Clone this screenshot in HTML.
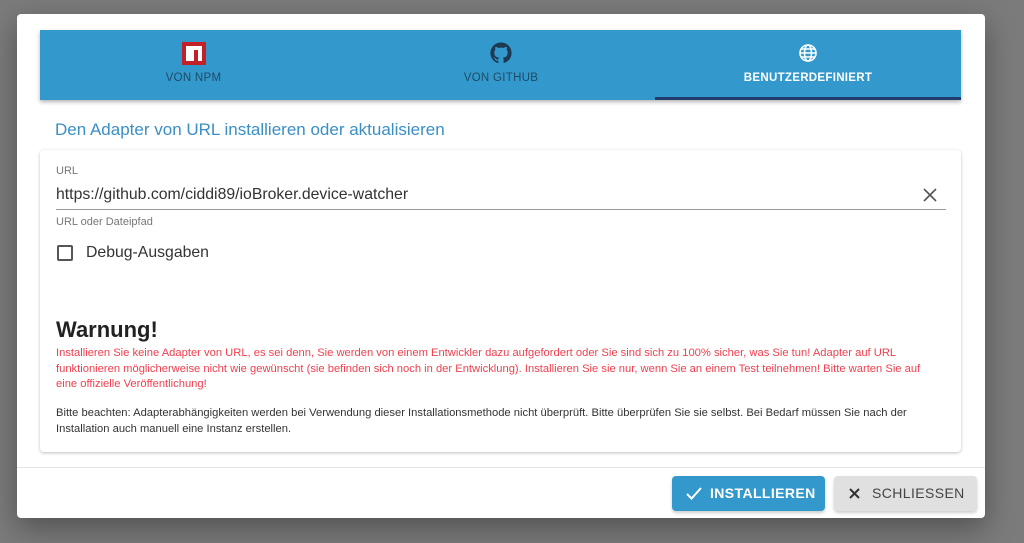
<!DOCTYPE html>
<html><head><meta charset="utf-8"><style>
*{margin:0;padding:0;box-sizing:border-box}
body{width:1024px;height:543px;background:#7b7b7b;font-family:"Liberation Sans",sans-serif;position:relative;overflow:hidden}
.dlg{position:absolute;left:17px;top:14px;width:968px;height:504px;background:#fff;border-radius:4px;box-shadow:0 10px 30px rgba(0,0,0,.35)}
.tabs{position:absolute;left:23px;top:16px;width:921px;height:70px;background:#3399cc;box-shadow:0 2px 4px rgba(0,0,0,.3)}
.tab{position:absolute;top:0;height:70px;text-align:center;font-size:11.5px;letter-spacing:.3px;color:#1e4a66}
.tab .lbl{position:absolute;top:42px;width:100%}
.ind{position:absolute;left:615px;top:67px;width:306px;height:3px;background:#1f3c6c}
.title{position:absolute;left:38px;top:106px;font-size:17px;color:#3a8fc4}
.card{position:absolute;left:23px;top:136px;width:921px;height:302px;background:#fff;border-radius:4px;box-shadow:0 1px 3px rgba(0,0,0,.25)}
.foot{position:absolute;left:0;top:453px;width:968px;height:1px;background:#e4e4e4}
.btn{position:absolute;top:462px;height:35px;border-radius:4px;font-size:14px;font-weight:bold;letter-spacing:.4px;line-height:35px;box-shadow:0 2px 3px rgba(0,0,0,.2)}
.sm{position:absolute;left:16px;width:885px;font-size:11.2px;line-height:15.5px}
</style></head><body>
<div class="dlg">
 <div class="tabs">
  <div class="tab" style="left:0;width:307px">
   <svg style="position:absolute;left:142px;top:12px" width="24" height="23" viewBox="0 0 24 23"><rect width="24" height="23" fill="#c12127"/><path d="M4 4h16v15h-4V8h-4v11H4z" fill="#fff"/></svg>
   <div class="lbl">VON NPM</div></div>
  <div class="tab" style="left:307px;width:308px">
   <svg style="position:absolute;left:142px;top:11px" width="24" height="24" viewBox="0 0 24 24"><path fill="#1e3a52" d="M12 1.5a10.5 10.5 0 0 0-3.3 20.5c.5.1.7-.2.7-.5v-1.900c-2.9.6-3.5-1.300-3.5-1.300-.5-1.200-1.200-1.500-1.200-1.500-.9-.7.1-.6.1-.6 1 .1 1.600 1.100 1.600 1.100.9 1.600 2.500 1.100 3.100.8.1-.7.4-1.100.6-1.400-2.300-.3-4.800-1.200-4.800-5.200 0-1.100.4-2.100 1.100-2.800-.1-.3-.5-1.400.1-2.800 0 0 .9-.3 2.900 1.100a10 10 0 0 1 5.200 0c2-1.400 2.900-1.100 2.900-1.100.6 1.400.2 2.500.1 2.800.7.7 1.100 1.700 1.100 2.800 0 4-2.500 4.900-4.800 5.200.4.3.7 1 .7 1.900v2.900c0 .3.2.6.7.5A10.5 10.5 0 0 0 12 1.5z"/></svg>
   <div class="lbl">VON GITHUB</div></div>
  <div class="tab" style="left:615px;width:306px;color:#fff;font-weight:bold">
   <svg style="position:absolute;left:143px;top:13px" width="20" height="20" viewBox="0 0 20 20" fill="none" stroke="#fff" stroke-width="1.6"><circle cx="10" cy="10" r="8"/><ellipse cx="10" cy="10" rx="3.5" ry="8"/><path d="M2 10h16M3.5 6h13M3.5 14h13"/></svg>
   <div class="lbl">BENUTZERDEFINIERT</div></div>
  <div class="ind"></div>
 </div>
 <div class="title">Den Adapter von URL installieren oder aktualisieren</div>
 <div class="card">
  <div style="position:absolute;left:16px;top:15px;font-size:11px;color:#777">URL</div>
  <div style="position:absolute;left:16px;top:36px;font-size:15.8px;color:#333">https://github.com/ciddi89/ioBroker.device-watcher</div>
  <svg style="position:absolute;left:883px;top:38px" width="14" height="14" viewBox="0 0 14 14" stroke="#555" stroke-width="1.6"><path d="M1 1l12 12M13 1L1 13"/></svg>
  <div style="position:absolute;left:16px;top:59px;width:890px;height:1px;background:#999"></div>
  <div style="position:absolute;left:16px;top:66px;font-size:11px;color:#777">URL oder Dateipfad</div>
  <div style="position:absolute;left:17px;top:95px;width:16px;height:16px;border:2px solid #555;border-radius:2px"></div>
  <div style="position:absolute;left:46px;top:94px;font-size:15.8px;color:#333">Debug-Ausgaben</div>
  <div style="position:absolute;left:16px;top:167px;font-size:22px;font-weight:bold;color:#222">Warnung!</div>
  <div class="sm" style="top:196px;color:#f0404f">Installieren Sie keine Adapter von URL, es sei denn, Sie werden von einem Entwickler dazu aufgefordert oder Sie sind sich zu 100% sicher, was Sie tun! Adapter auf URL funktionieren möglicherweise nicht wie gewünscht (sie befinden sich noch in der Entwicklung). Installieren Sie sie nur, wenn Sie an einem Test teilnehmen! Bitte warten Sie auf eine offizielle Veröffentlichung!</div>
  <div class="sm" style="top:256px;color:#333">Bitte beachten: Adapterabhängigkeiten werden bei Verwendung dieser Installationsmethode nicht überprüft. Bitte überprüfen Sie sie selbst. Bei Bedarf müssen Sie nach der Installation auch manuell eine Instanz erstellen.</div>
 </div>
 <div class="foot"></div>
 <div class="btn" style="left:655px;width:153px;background:#3399cc;color:#fff">
  <svg style="position:absolute;left:14px;top:11px" width="16" height="13" viewBox="0 0 16 13" fill="none" stroke="#fff" stroke-width="2"><path d="M1 7l4.5 4.5L15 1"/></svg>
  <span style="position:absolute;left:38px">INSTALLIEREN</span></div>
 <div class="btn" style="left:817px;width:143px;background:#e0e0e0;color:#444;font-weight:normal">
  <svg style="position:absolute;left:15px;top:12px" width="11" height="11" viewBox="0 0 11 11" stroke="#333" stroke-width="2"><path d="M1 1l9 9M10 1l-9 9"/></svg>
  <span style="position:absolute;left:38px">SCHLIESSEN</span></div>
</div>
</body></html>
